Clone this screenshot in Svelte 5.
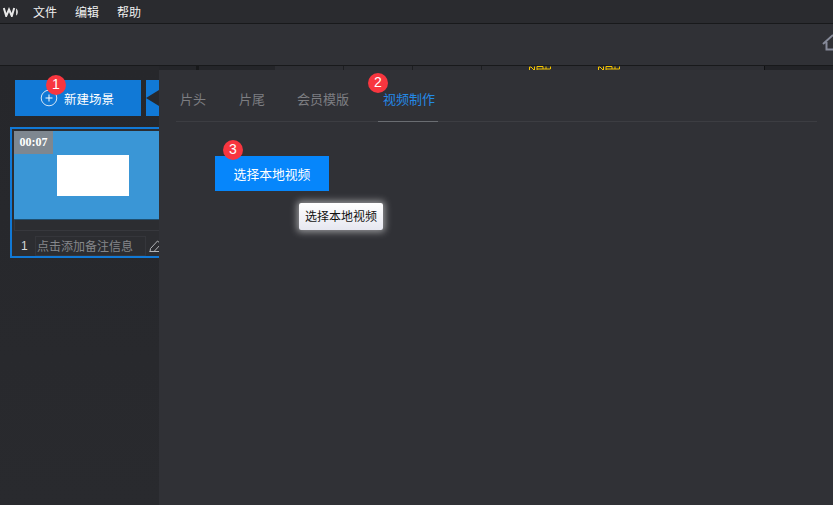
<script>
  const tabs = [
    { label: '片头', w: 59 },
    { label: '片尾', w: 58 },
    { label: '会员模版', w: 85 },
    { label: '视频制作', w: 60, active: true }
  ];
  const menus = ['文件', '编辑', '帮助'];
</script>

<div class="app">
  <header class="menubar">
    <svg class="logo" width="16" height="10" viewBox="0 0 16 10">
      <path d="M0.8 1 L3.2 9 L6 2.5 L8.8 9 L11.2 1" fill="none" stroke="#e8e8e8" stroke-width="2"/>
      <path d="M13 1.5 C15.6 2.5 15.6 7.5 13 8.5 Z" fill="#cfcfcf"/>
    </svg>
    <nav class="menus">
      {#each menus as m}<span>{m}</span>{/each}
    </nav>
  </header>

  <div class="toolbar">
    <svg class="home" width="12" height="18" viewBox="0 0 12 18">
      <path d="M2 11 L12 2 M5.5 9 V16.5 H12" fill="none" stroke="#868a99" stroke-width="2"/>
    </svg>
  </div>

  <div class="body">
    <aside class="sidebar">
      <div class="actions">
        <button class="new">
          <svg width="18" height="18" viewBox="0 0 18 18">
            <circle cx="9" cy="9" r="7.8" fill="none" stroke="#d5e6f6" stroke-width="1"/>
            <path d="M5.5 9 H12.5 M9 5.5 V12.5" stroke="#fff" stroke-width="1"/>
          </svg>
          新建场景
        </button>
        <div class="new-second"><span class="arrow"></span></div>
      </div>

      <div class="card">
        <div class="thumb">
          <span class="time">00:07</span>
          <div class="slide"></div>
        </div>
        <div class="strip"></div>
        <div class="meta">
          <span class="idx">1</span>
          <span class="note">点击添加备注信息</span>
          <svg class="pencil" width="12" height="14" viewBox="0 0 12 14">
            <path d="M1 13 L1.5 9.5 L8.5 2 L12 5 L5 12.5 H0.5 M1.5 12.5 H12" fill="none" stroke="#b4b6b9" stroke-width="1"/>
          </svg>
        </div>
      </div>
    </aside>

    <section class="timeline">
      <div class="seg seg-a"></div>
      <div class="seg seg-b"></div>
      <div class="seg seg-c"></div>
      <div class="seg seg-c"></div>
      <div class="seg seg-c"></div>
      <div class="seg seg-c glyphs">
        <svg width="22" height="4" viewBox="0 0 22 4"><path d="M0.5 4 V1 H2 L5 4 M5.5 4 V0.5 M8 4 V0.5 H14 V3 H8 M14 3 H21.5 V0.5 M17 0.5 V3" fill="none" stroke="#f4c400" stroke-width="1"/></svg>
      </div>
      <div class="seg seg-d glyphs">
        <svg width="22" height="4" viewBox="0 0 22 4"><path d="M0.5 4 V1 H2 L5 4 M5.5 4 V0.5 M8 4 V0.5 H14 V3 H8 M14 3 H21.5 V0.5 M17 0.5 V3" fill="none" stroke="#f4c400" stroke-width="1"/></svg>
      </div>
      <div class="seg seg-e"></div>
    </section>

    <div class="panel">
      <div class="tabs">
        {#each tabs as t}
          <span class="tab" class:active={t.active} style="width:{t.w}px">{t.label}</span>
        {/each}
      </div>
      <div class="content">
        <button class="pick">选择本地视频</button>
        <span class="tooltip">选择本地视频</span>
      </div>
    </div>
  </div>

  <span class="badge b1">1</span>
  <span class="badge b2">2</span>
  <span class="badge b3">3</span>
</div>

<style>
  :global(body) { margin: 0; background: #27282c; }
  .app {
    position: relative;
    width: 833px;
    height: 505px;
    overflow: hidden;
    display: flex;
    flex-direction: column;
    font-family: "Noto Sans CJK SC", "Liberation Sans", sans-serif;
    font-size: 12px;
    color: #fff;
    background: #27282c;
  }
  .menubar {
    height: 23px;
    flex: none;
    display: flex;
    align-items: center;
    padding-left: 3px;
    background: #2a2b2f;
    border-bottom: 1px solid #18191b;
    box-sizing: content-box;
  }
  .logo { flex: none; }
  .menus { display: flex; gap: 18px; margin-left: 14px; color: #f0f0f0; line-height: 23px; }
  .toolbar {
    flex: none;
    display: flex;
    justify-content: flex-end;
    align-items: flex-start;
    padding-top: 9px;
    box-sizing: border-box;
    background: #303136;
    border-bottom: 1px solid #18191b;
    height: 42px;
  }
  .home { flex: none; }
  .body { flex: 1; display: flex; position: relative; min-height: 0; }
  .sidebar {
    width: 159px;
    flex: none;
    padding: 14px 0 0 10px;
    box-sizing: border-box;
    background: linear-gradient(#26272b, #292a2e);
    overflow: hidden;
  }
  .actions { display: flex; gap: 5px; margin-left: 5px; height: 36px; }
  .new {
    width: 126px;
    flex: none;
    display: flex;
    align-items: center;
    justify-content: center;
    gap: 6px;
    padding: 0 2px 0 0;
    border: 0;
    border-radius: 0;
    background: #1179d6;
    color: #fff;
    font: inherit;
    font-size: 12.5px;
  }
  .new-second { flex: 1 0 30px; background: #1179d6; position: relative; overflow: hidden; }
  .arrow {
    position: absolute;
    left: 0;
    top: 7px;
    border-style: solid;
    border-width: 11px 18px 11px 0;
    border-color: transparent #27282c transparent transparent;
  }
  .card {
    margin-top: 11px;
    width: 180px;
    height: 131px;
    box-sizing: border-box;
    border: 2px solid #1179d6;
    padding: 2px 2px 0;
    background: #2c2d31;
    display: flex;
    flex-direction: column;
  }
  .thumb {
    height: 88px;
    flex: none;
    position: relative;
    background: #3a96d6;
    border-bottom: 1px solid #1f4f70;
    box-sizing: content-box;
  }
  .time {
    position: absolute;
    left: 0;
    top: 0;
    width: 39px;
    height: 23px;
    line-height: 23px;
    text-align: center;
    background: #7e8790;
    font-family: "Liberation Serif", serif;
    font-weight: 700;
    font-size: 12px;
  }
  .slide {
    position: absolute;
    left: 43px;
    top: 24px;
    width: 72px;
    height: 41px;
    background: #fff;
  }
  .strip { height: 11px; flex: none; border: 1px solid #37383d; border-top: 0; box-sizing: border-box; }
  .meta { display: flex; align-items: center; height: 25px; padding-top: 4px; box-sizing: border-box; }
  .idx { width: 21px; padding-left: 7px; box-sizing: border-box; color: #d8d8d8; flex: none; font-family: "Liberation Sans", sans-serif; }
  .note {
    width: 111px;
    height: 20px;
    flex: none;
    box-sizing: border-box;
    border: 1px solid #35363b;
    padding-left: 1px;
    line-height: 18px;
    color: #85878b;
    white-space: nowrap;
  }
  .pencil { margin-left: 3px; flex: none; }
  .timeline {
    flex: 1;
    display: flex;
    height: 5px;
    background: #2d2e33;
  }
  .seg { height: 5px; position: relative; box-sizing: border-box; }
  .seg-a { width: 40px; background: #242529; border-right: 3px solid #18191b; }
  .seg-b { width: 76px; background: #242529; }
  .seg-c { width: 69px; border-right: 1px solid #1d1e21; }
  .seg-d { width: 213px; }
  .seg-e { flex: 1; background: #222327; border-left: 1px solid #101113; }
  .glyphs svg { position: absolute; top: 0; left: 47px; display: block; }
  .panel {
    position: absolute;
    left: 159px;
    top: 4px;
    right: 0;
    bottom: 0;
    background: #303136;
    padding: 0 16px 0 17px;
    box-sizing: border-box;
  }
  .tabs {
    display: flex;
    height: 51px;
    border-bottom: 1px solid #3c3d42;
    box-sizing: content-box;
  }
  .tab {
    flex: none;
    box-sizing: border-box;
    padding: 20px 0 0 4px;
    color: #7d7e82;
    font-size: 13px;
    line-height: 18px;
    white-space: nowrap;
  }
  .tab.active {
    color: #2489e6;
    height: 52px;
    border-bottom: 1px solid #6a6d72;
    padding-left: 5px;
  }
  .content { position: relative; padding: 34px 0 0 39px; }
  .pick {
    display: block;
    width: 114px;
    height: 35px;
    padding: 0;
    border: 0;
    border-radius: 0;
    background: #0686fb;
    color: #fff;
    font: inherit;
    font-size: 12.8px;
  }
  .tooltip {
    position: absolute;
    left: 123px;
    top: 81px;
    width: 84px;
    height: 27px;
    line-height: 26px;
    text-align: center;
    color: #111;
    border-radius: 2px;
    background: linear-gradient(#ffffff, #e6e7f0);
    box-shadow: 0 0 7px 2px rgba(255, 255, 255, 0.5);
  }
  .badge {
    position: absolute;
    width: 20px;
    height: 20px;
    border-radius: 50%;
    background: #f8363f;
    color: #fff;
    text-align: center;
    line-height: 19px;
    font-family: "Liberation Sans", sans-serif;
    font-size: 14px;
  }
  .b1 { left: 46px; top: 75px; }
  .b2 { left: 368px; top: 73px; }
  .b3 { left: 223px; top: 140px; }
</style>
